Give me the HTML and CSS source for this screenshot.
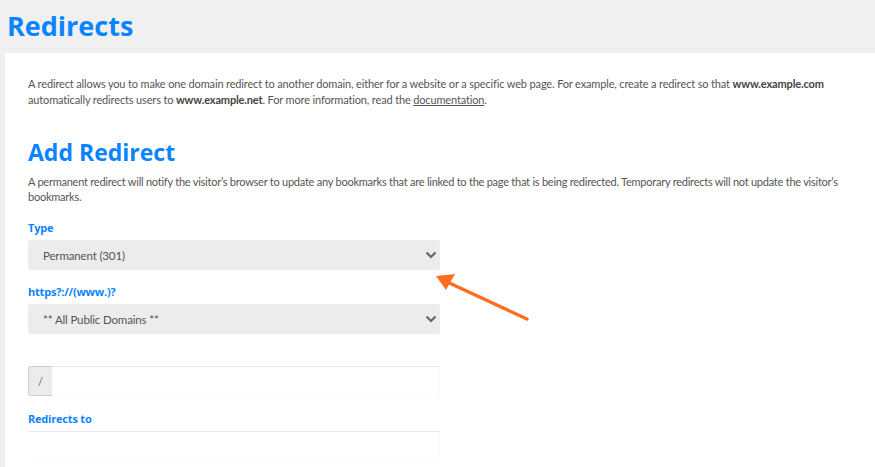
FILE: index.html
```html
<!DOCTYPE html>
<html lang="en">
<head>
    <meta charset="UTF-8">
    <meta name="viewport" content="width=device-width, initial-scale=1.0">
    <title>Redirects</title>
    <link rel="stylesheet" href="styles.css">
</head>
<body>

<h1 class="page-title">Redirects</h1>

<div class="panel">
    <p class="intro">
        A redirect allows you to make one domain redirect to another domain, either for a website or a specific web page. For example, create a redirect so that <b>www.example.com</b> automatically redirects users to <b>www.example.net</b>. For more information, read the <a href="#">documentation</a>.
    </p>

    <h2 class="section-title">Add Redirect</h2>
    <p class="section-desc">A permanent redirect will notify the visitor’s browser to update any bookmarks that are linked to the page that is being redirected. Temporary redirects will not update the visitor’s bookmarks.</p>

    <form class="redirect-form">
        <label class="field-label">Type</label>
        <div class="select-box">
            <span>Permanent (301)</span>
            <svg class="chevron" width="12" height="8" viewBox="0 0 12 8"><path d="M1.5 1.5 L6 6 L10.5 1.5" fill="none" stroke="#666" stroke-width="2.2"/></svg>
        </div>

        <label class="field-label">https?://(www.)?</label>
        <div class="select-box">
            <span>** All Public Domains **</span>
            <svg class="chevron" width="12" height="8" viewBox="0 0 12 8"><path d="M1.5 1.5 L6 6 L10.5 1.5" fill="none" stroke="#666" stroke-width="2.2"/></svg>
        </div>

        <div class="input-group path-group">
            <span class="addon">/</span>
            <div class="text-input"></div>
        </div>

        <label class="field-label">Redirects to</label>
        <div class="text-input solo"></div>
    </form>
</div>

<!-- annotation arrow -->
<svg class="pointer" width="110" height="65" viewBox="0 0 110 65">
    <line x1="94" y1="50" x2="12" y2="12" stroke="#ff6d1f" stroke-width="3.2" stroke-linecap="round"/>
    <polygon points="3,7 22,5 13,21" fill="#ff6d1f"/>
</svg>

</body>
</html>
```

FILE: styles.css
```css
body {
    margin: 0;
    background-color: #f0f0f0;
    font-family: "Lato", "Open Sans", sans-serif;
    color: #555;
    font-size: 11px;
    letter-spacing: -0.15px;
    position: relative;
    height: 467px;
    overflow: hidden;
}

.page-title {
    margin: 0;
    padding: 11px 0 0 7px;
    height: 53px;
    box-sizing: border-box;
    font-family: "Open Sans", sans-serif;
    font-size: 27px;
    font-weight: 700;
    letter-spacing: 0;
    color: #0a84ff;
    line-height: 30px;
}

.panel {
    margin-left: 5px;
    background-color: #fff;
    padding: 23px 23px 0 23px;
    height: 414px;
}

.intro {
    margin: 0;
    line-height: 16px;
}

.intro b {
    color: #444;
}

.intro a {
    color: #555;
    text-decoration: underline;
}

.section-title {
    margin: 29px 0 0 0;
    font-family: "Open Sans", sans-serif;
    font-size: 23px;
    font-weight: 700;
    letter-spacing: 0;
    color: #0a84ff;
    line-height: 30px;
}

.section-desc {
    margin: 7px 0 0 0;
    line-height: 15px;
    letter-spacing: -0.24px;
}

.redirect-form {
    width: 412px;
    margin-top: 16px;
}

.field-label {
    display: block;
    font-family: "Open Sans", sans-serif;
    font-weight: 700;
    color: #0a84ff;
    line-height: 16px;
    font-size: 11px;
    letter-spacing: -0.2px;
    margin-bottom: 4px;
}

.select-box {
    display: flex;
    align-items: center;
    justify-content: space-between;
    height: 30px;
    background-color: #ececec;
    border-radius: 3px;
    padding: 0 3px 0 15px;
    margin-bottom: 14px;
}

.select-box span {
    color: #555;
    font-size: 11.5px;
}

.input-group {
    display: flex;
    height: 30px;
}

.path-group {
    margin-top: 32px;
    margin-bottom: 15px;
}

.addon {
    width: 24px;
    box-sizing: border-box;
    background-color: #ececec;
    border: 1px solid #ccc;
    border-right: none;
    border-radius: 3px 0 0 3px;
    display: flex;
    align-items: center;
    justify-content: center;
    color: #666;
}

.text-input {
    flex: 1;
    border-top: 1px solid #eaeaea;
    border-right: 1px solid #fafafa;
    border-bottom: 1px solid #fcfcfc;
    background-color: #fff;
}

.text-input.solo {
    height: 28px;
}

.pointer {
    position: absolute;
    left: 433px;
    top: 269px;
}
```
